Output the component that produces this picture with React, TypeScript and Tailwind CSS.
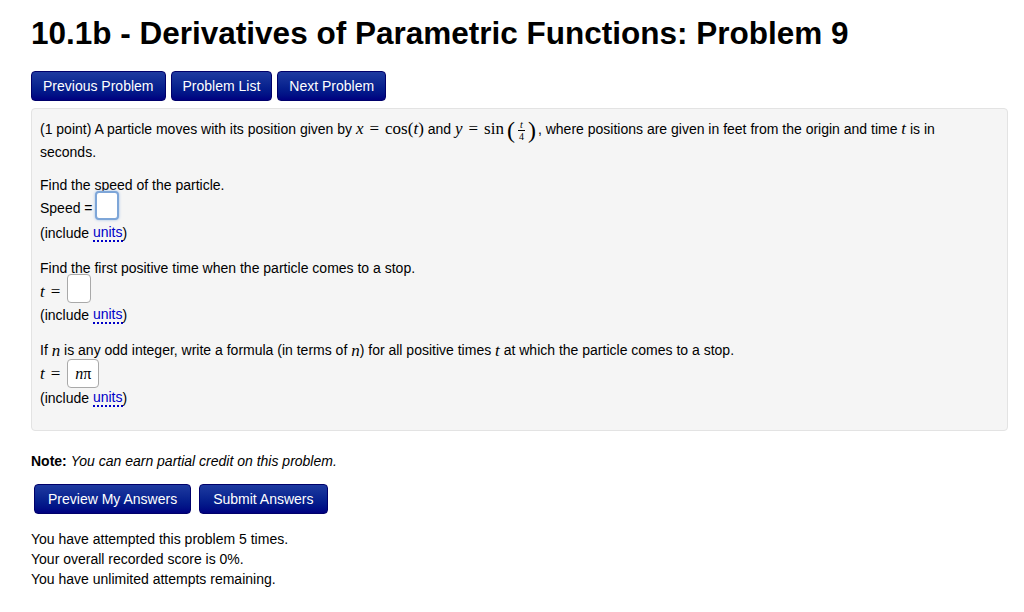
import type { ReactNode } from "react";

const sans = "font-['Liberation_Sans',Arial,Helvetica,sans-serif]";
const serif = "font-['Liberation_Serif','Times_New_Roman',serif]";

function NavButton({ children, wide }: { children: ReactNode; wide?: boolean }) {
  return (
    <button
      className={
        "h-[30px] rounded-[4px] border border-[#00006a] bg-gradient-to-b from-[#1e3aa0] to-[#000080] text-white text-[14px] leading-none " +
        (wide ? "px-[13px]" : "px-[11px]")
      }
    >
      {children}
    </button>
  );
}

function AnswerBox({ value, focused }: { value?: ReactNode; focused?: boolean }) {
  return (
    <span
      className={
        "inline-flex items-center justify-center h-[29px] rounded-[4px] bg-white " +
        (value ? "px-[7px] " : "w-[24px] ") +
        (focused
          ? "border-2 border-[#7ea6d8] shadow-[0_0_3px_#9dbde6]"
          : "border border-[#a9a9a9]")
      }
    >
      {value}
    </span>
  );
}

function Units() {
  return (
    <div className="h-[23px] flex items-center">
      (include&nbsp;
      <span className="text-[#0000c8] border-b-2 border-dotted border-[#0000c8] leading-[15px]">
        units
      </span>
      )
    </div>
  );
}

function V({ children }: { children: ReactNode }) {
  return <span className={serif + " italic text-[17px]"}>{children}</span>;
}

function M({ children }: { children: ReactNode }) {
  return <span className={serif + " text-[17px]"}>{children}</span>;
}

function Eq() {
  return <span className={serif + " text-[17px] mx-[6px]"}>=</span>;
}

export default function App() {
  return (
    <div className={sans + " w-[1024px] h-[612px] bg-white text-black overflow-hidden"}>
      <div className="pl-[31px] pr-[16px]">
        <h1 className="pt-[17px] text-[31.5px] leading-[32px] font-bold">
          10.1b - Derivatives of Parametric Functions: Problem 9
        </h1>

        <div className="mt-[22px] flex gap-[5px]">
          <NavButton>Previous Problem</NavButton>
          <NavButton>Problem List</NavButton>
          <NavButton>Next Problem</NavButton>
        </div>

        {/* problem body */}
        <div className="mt-[7px] w-[977px] rounded-[4px] border border-[#e3e3e3] bg-[#f5f5f5] pl-[8px] pr-[40px] pt-[8px] pb-[20px] text-[14px] leading-[23px]">
          <p className="leading-[23px]">
            (1 point) A particle moves with its position given by <V>x</V>
            <Eq />
            <M>cos(</M>
            <V>t</V>
            <M>)</M> and <V>y</V>
            <Eq />
            <M>sin</M>
            <span className="inline-flex items-center align-middle h-[22px] ml-[3px] mr-[2px]">
              <span className={serif + " text-[24px] leading-none font-light"}>(</span>
              <span className={serif + " inline-flex flex-col items-center text-[10px] leading-[9px] mx-[3px]"}>
                <span className="italic">t</span>
                <span className="border-t border-black w-[7px] my-[1px]" />
                <span>4</span>
              </span>
              <span className={serif + " text-[24px] leading-none font-light"}>)</span>
            </span>
            , where positions are given in feet from the origin and time <V>t</V> is in seconds.
          </p>

          <div className="mt-[10px] h-[23px] flex items-center">Find the speed of the particle.</div>
          <div className="h-[23px] flex items-center">
            Speed =<span className="ml-[2px]"><AnswerBox focused /></span>
          </div>
          <div className="mt-[2px]">
            <Units />
          </div>

          <div className="mt-[12px] h-[23px] flex items-center">
            Find the first positive time when the particle comes to a stop.
          </div>
          <div className="h-[23px] flex items-center">
            <span>
              <V>t</V>
              <Eq />
            </span>
            <span className="ml-[1px]">
              <AnswerBox />
            </span>
          </div>
          <div className="mt-[1px]">
            <Units />
          </div>

          <div className="mt-[12px] h-[23px] flex items-center whitespace-pre">
            If <V>n</V> is any odd integer, write a formula (in terms of <V>n</V>) for all positive
            times <V>t</V> at which the particle comes to a stop.
          </div>
          <div className="h-[23px] flex items-center">
            <span>
              <V>t</V>
              <Eq />
            </span>
            <span className="ml-[1px]">
              <AnswerBox value={<span className={serif + " text-[16px]"}><i>n</i>π</span>} />
            </span>
          </div>
          <div className="mt-[2px]">
            <Units />
          </div>
        </div>

        <p className="mt-[20px] text-[14px] leading-[20px]">
          <b>Note:</b> <i>You can earn partial credit on this problem.</i>
        </p>

        <div className="mt-[13px] ml-[3px] flex gap-[8px]">
          <NavButton wide>Preview My Answers</NavButton>
          <NavButton wide>Submit Answers</NavButton>
        </div>

        <div className="mt-[15px] text-[14px] leading-[20px]">
          <p>You have attempted this problem 5 times.</p>
          <p>Your overall recorded score is 0%.</p>
          <p>You have unlimited attempts remaining.</p>
        </div>
      </div>
    </div>
  );
}
